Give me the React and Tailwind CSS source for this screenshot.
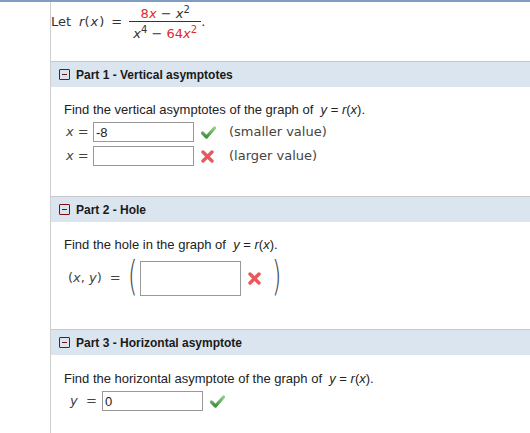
import React from 'react';

const sans = "font-['Liberation_Sans',Arial,sans-serif]";
const math = "font-['DejaVu_Sans',Verdana,sans-serif]";

const Check = () => (
  <svg width="15" height="13" viewBox="0 0 15 13">
    <defs>
      <linearGradient id="ck" x1="0" y1="0" x2="0" y2="1">
        <stop offset="0" stopColor="#8fd08a" />
        <stop offset="1" stopColor="#3f8f3c" />
      </linearGradient>
    </defs>
    <path d="M1.5 7 L5.5 11 L13.5 2" stroke="url(#ck)" strokeWidth="3.2" fill="none" strokeLinecap="round" strokeLinejoin="round" />
  </svg>
);

const Cross = () => (
  <svg width="13" height="13" viewBox="0 0 13 13">
    <path d="M2 2 L11 11 M11 2 L2 11" stroke="#e8585c" strokeWidth="3.4" strokeLinecap="round" />
  </svg>
);

const PartHeader = ({ title }) => (
  <div className="h-[26px] border-t border-[#c8c8c8] bg-[#dae5ef] flex items-center pl-[8px]">
    <span className="w-[11px] h-[11px] border-[1.5px] border-[#7a1010] rounded-[1px] flex items-center justify-center">
      <span className="w-[5px] h-[1.5px] bg-[#7a1010]" />
    </span>
    <span className={`ml-[6px] text-[12px] font-bold text-[#1a1a1a] ${sans}`}>{title}</span>
  </div>
);

const FindLine = ({ children }) => (
  <p className={`text-[13px] leading-[15px] text-[#222] pl-[13px] ${sans}`}>
    {children}&nbsp; <span className="italic">y</span> = <span className="italic">r</span>(<span className="italic">x</span>).
  </p>
);

const Box = ({ value, className }) => (
  <input
    readOnly
    value={value}
    className={`border border-[#999] bg-white px-[2px] text-[13px] text-[#222] outline-none ${sans} ${className}`}
  />
);

export default function App() {
  return (
    <div className="w-[530px] h-[433px] overflow-hidden bg-white border-t-2 border-[#7f9dc0] flex">
      <div className="w-[50px] shrink-0" />
      <div className="flex-1 border-l border-[#cfcfcf]">
        {/* prompt */}
        <div className={`h-[59px] flex items-start pt-[1px] text-[13px] text-[#333] ${math}`}>
          <div className="flex items-center">
            <span>Let</span>
            <span className="ml-[8px]"><span className="italic">r</span>(<span className="italic px-[1px]">x</span>)</span>
            <span className="ml-[7px]">=</span>
            <span className="ml-[7px] inline-flex flex-col items-center w-[72px]">
              <span className="leading-[15px] pt-[3px]">
                <span className="text-[#e0282e]">8<span className="italic">x</span></span> − <span className="italic">x</span><sup className="text-[10px]">2</sup>
              </span>
              <span className="w-full h-px bg-[#333]" />
              <span className="leading-[15px] pt-[4px]">
                <span className="italic">x</span><sup className="text-[10px]">4</sup> − <span className="text-[#e0282e]">64<span className="italic">x</span><sup className="text-[10px]">2</sup></span>
              </span>
            </span>
            <span>.</span>
          </div>
        </div>

        {/* part 1 */}
        <PartHeader title="Part 1 - Vertical asymptotes" />
        <div className="h-[109px] pt-[15px]">
          <FindLine>Find the vertical asymptotes of the graph of</FindLine>
          <div className={`mt-[5px] flex flex-col gap-[4px] pl-[15px] text-[13px] text-[#444] ${math}`}>
            <div className="flex items-center h-[20px]">
              <span className="w-[27px]"><span className="italic">x</span> =</span>
              <Box value="-8" className="w-[101px] h-[20px]" />
              <span className="ml-[7px] flex"><Check /></span>
              <span className="ml-[13px]">(smaller value)</span>
            </div>
            <div className="flex items-center h-[20px]">
              <span className="w-[27px]"><span className="italic">x</span> =</span>
              <Box value="" className="w-[101px] h-[20px]" />
              <span className="ml-[7px] flex"><Cross /></span>
              <span className="ml-[15px]">(larger value)</span>
            </div>
          </div>
        </div>

        {/* part 2 */}
        <PartHeader title="Part 2 - Hole" />
        <div className="h-[107px] pt-[15px]">
          <FindLine>Find the hole in the graph of</FindLine>
          <div className={`mt-[8px] flex items-center h-[36px] pl-[17px] text-[13px] text-[#444] ${math}`}>
            <span>(<span className="italic">x</span>, <span className="italic">y</span>)</span>
            <span className="ml-[8px]">=</span>
            <span className="ml-[4px] text-[40px] leading-[36px] font-extralight scale-x-[0.6] -mt-[5px]">(</span>
            <Box value="" className="w-[101px] h-[35px]" />
            <span className="ml-[7px] flex"><Cross /></span>
            <span className="ml-[8px] text-[40px] leading-[36px] font-extralight scale-x-[0.6] -mt-[5px]">)</span>
          </div>
        </div>

        {/* part 3 */}
        <PartHeader title="Part 3 - Horizontal asymptote" />
        <div className="pt-[16px]">
          <FindLine>Find the horizontal asymptote of the graph of</FindLine>
          <div className={`mt-[5px] flex items-center h-[20px] pl-[19px] text-[13px] text-[#444] ${math}`}>
            <span className="w-[32px]"><span className="italic">y</span> &nbsp;=</span>
            <Box value="0" className="w-[101px] h-[20px]" />
            <span className="ml-[7px] flex"><Check /></span>
          </div>
        </div>
      </div>
    </div>
  );
}
